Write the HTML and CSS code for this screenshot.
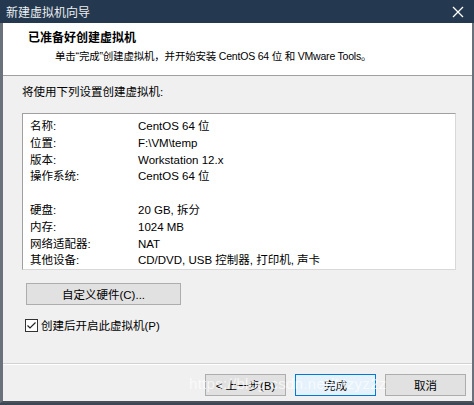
FILE: index.html
```html
<!DOCTYPE html>
<html lang="zh-CN">
<head>
  <meta charset="UTF-8">
  <title>新建虚拟机向导</title>
  <link rel="stylesheet" href="styles.css">
</head>
<body>
  <div class="window">
    <div class="titlebar">
      <span class="title">新建虚拟机向导</span>
      <svg class="close" width="12" height="12" viewBox="0 0 12 12">
        <path d="M1 1 L11 11 M11 1 L1 11" stroke="#fff" stroke-width="1.3"/>
      </svg>
    </div>

    <div class="header">
      <div class="head-title">已准备好创建虚拟机</div>
      <div class="head-sub">单击“完成”创建虚拟机，并开始安装 CentOS 64 位 和 VMware Tools。</div>
    </div>

    <div class="body">
      <div class="intro">将使用下列设置创建虚拟机:</div>
      <div class="summary">
        <div class="row"><span class="key">名称:</span><span>CentOS 64 位</span></div>
        <div class="row"><span class="key">位置:</span><span>F:\VM\temp</span></div>
        <div class="row"><span class="key">版本:</span><span>Workstation 12.x</span></div>
        <div class="row"><span class="key">操作系统:</span><span>CentOS 64 位</span></div>
        <div class="row gap"></div>
        <div class="row"><span class="key">硬盘:</span><span>20 GB, 拆分</span></div>
        <div class="row"><span class="key">内存:</span><span>1024 MB</span></div>
        <div class="row"><span class="key">网络适配器:</span><span>NAT</span></div>
        <div class="row"><span class="key">其他设备:</span><span>CD/DVD, USB 控制器, 打印机, 声卡</span></div>
      </div>
      <button class="btn custom">自定义硬件(C)...</button>
      <label class="check">
        <svg width="13" height="13" viewBox="0 0 13 13">
          <rect x="0.5" y="0.5" width="12" height="12" fill="#fff" stroke="#333"/>
          <path d="M2.5 6.5 L5 9 L10.5 3.5" fill="none" stroke="#222" stroke-width="1.2"/>
        </svg>
        创建后开启此虚拟机(P)
      </label>
    </div>

    <div class="footer">
      <button class="btn">&lt; 上一步(B)</button>
      <button class="btn primary">完成</button>
      <button class="btn">取消</button>
      <span class="watermark">https://blog.csdn.net/Mzyz2z</span>
    </div>
  </div>
</body>
</html>
```

FILE: styles.css
```css
body {
  margin: 0;
  background: #3c4654;
  font-family: "Liberation Sans", "Noto Sans CJK SC", sans-serif;
  font-size: 11.5px;
  color: #000;
}
.window {
  width: 469px;
  height: 401px;
  border-left: 3px solid #6b717a;
  border-right: 2px solid #6b717a;
  border-bottom: 2px solid #4a5059;
  background: #f0f0f0;
  display: flex;
  flex-direction: column;
  position: relative;
}
.titlebar {
  height: 23px;
  margin-left: -3px;
  margin-right: -2px;
  padding: 0 10px 0 6px;
  background: #243950;
  color: #fff;
  display: flex;
  align-items: center;
  justify-content: space-between;
  font-size: 12px;
}
.title {
  opacity: 0.92;
}
.header {
  height: 53px;
  background: #fff;
  border-bottom: 1px solid #a0a0a0;
  box-sizing: border-box;
  padding-top: 7px;
}
.head-title {
  font-weight: bold;
  padding-left: 25px;
  line-height: 16px;
  font-size: 12px;
}
.head-sub {
  padding-left: 52px;
  margin-top: 2px;
  line-height: 16px;
  font-size: 10.5px;
  letter-spacing: -0.2px;
}
.body {
  flex: 1;
  padding: 0 0 0 19px;
  border-bottom: 1px solid #d2d2d2;
  box-shadow: 0 1px 0 #fff;
}
.intro {
  margin-top: 8px;
  line-height: 16px;
}
.summary {
  margin-top: 13px;
  width: 434px;
  height: 157px;
  box-sizing: border-box;
  background: #fff;
  border: 1px solid #a0a0a0;
  border-right-color: #d8d8d8;
  border-bottom-color: #d8d8d8;
  padding: 4px 0 0 7px;
}
.row {
  display: flex;
  height: 16.8px;
  line-height: 17px;
}
.key {
  width: 108px;
}
.btn {
  font-family: inherit;
  font-size: 11.5px;
  height: 22px;
  width: 81px;
  background: #e1e1e1;
  border: 1px solid #adadad;
  padding: 0;
  color: #000;
}
.custom {
  display: block;
  width: 155px;
  margin: 13px 0 0 4px;
}
.check {
  display: flex;
  align-items: center;
  gap: 3px;
  margin-top: 12px;
  margin-left: 3px;
}
.footer {
  height: 37px;
  display: flex;
  justify-content: flex-end;
  align-items: flex-start;
  gap: 9px;
  padding: 10px 6px 0 0;
  box-sizing: border-box;
  position: relative;
}
.primary {
  background: #e5f1fb;
  border: 1px solid #0078d7;
}
.watermark {
  position: absolute;
  left: 186px;
  top: 11px;
  font-size: 15px;
  color: rgba(255, 255, 255, 0.7);
  letter-spacing: 0.3px;
  font-family: "Liberation Sans", sans-serif;
  pointer-events: none;
}
```
